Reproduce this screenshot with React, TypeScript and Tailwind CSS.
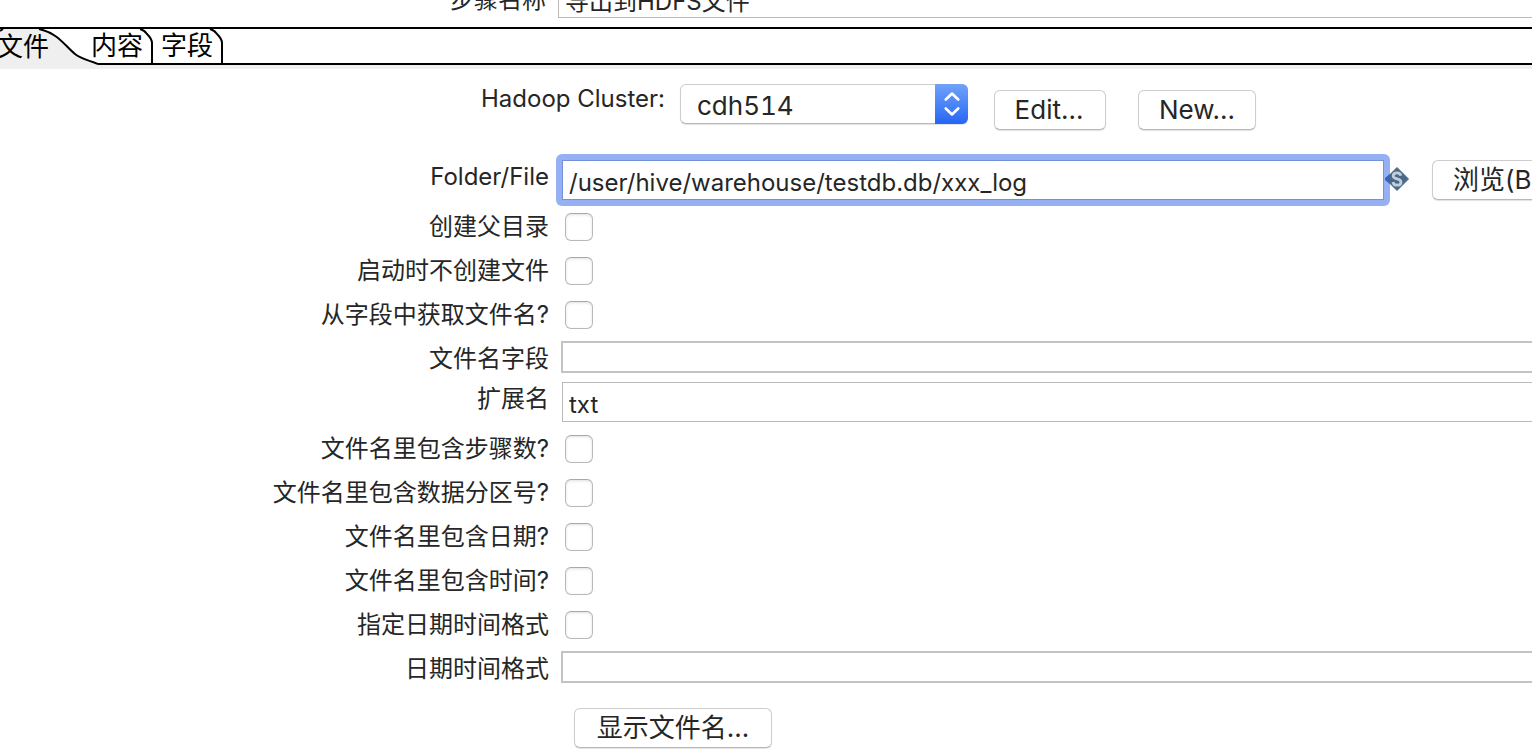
import { useState, type ReactNode } from "react";

const TEXT_FONT = "font-['Inter','Noto_Sans_CJK_SC',sans-serif]";

function Row({ label, htmlFor, className, children }: { label: string; htmlFor: string; className: string; children: ReactNode }) {
  return (
    <div className={`flex items-start ${className}`}>
      <label htmlFor={htmlFor} className="w-[549px] shrink-0 text-right whitespace-nowrap">
        {label}
      </label>
      {children}
    </div>
  );
}

function CheckRow({ id, label }: { id: string; label: string }) {
  return (
    <Row label={label} htmlFor={id} className="h-11 pt-[7px]">
      <input
        id={id}
        type="checkbox"
        className="mt-px ml-4 size-7 appearance-none rounded-[6px] border border-[#b9b9b9] border-t-[#a8a8a8] bg-white shadow-[inset_0_1px_3px_rgba(0,0,0,0.12)] checked:bg-[#3b7cf6]"
      />
    </Row>
  );
}

function EmptyField({ id, label }: { id: string; label: string }) {
  return (
    <Row label={label} htmlFor={id} className="h-11 pt-[7px]">
      <input
        id={id}
        type="text"
        className="-mt-[3px] ml-3 h-8 min-w-0 flex-1 border-2 border-r-0 border-[#c3c3c3] bg-white px-1.5 outline-none"
      />
    </Row>
  );
}

const BUTTON =
  "h-10 shrink-0 whitespace-nowrap border border-[#cdcdcd] border-b-[#b8b8b8] bg-white text-[26px] leading-9 shadow-[0_1px_1px_rgba(0,0,0,0.12)]";

function TabEdge() {
  return (
    <svg aria-hidden="true" className="absolute top-0 right-0 h-[34px] w-4" viewBox="0 0 16 34" fill="none" stroke="#000" strokeWidth="2">
      <path d="M3 0 C7 1 8 2 10 5 C13 8 15 10 15 14 V34" />
    </svg>
  );
}

export default function App() {
  const [path, setPath] = useState("/user/hive/warehouse/testdb.db/xxx_log");
  const [ext, setExt] = useState("txt");
  const [step, setStep] = useState("导出到HDFS文件");

  return (
    <main className={`overflow-hidden bg-white text-[24px] leading-[30px] text-[#262626] ${TEXT_FONT}`}>
      <header className="flex h-[27px] items-end overflow-hidden pb-[9px]">
        <label htmlFor="step" className="w-[546px] shrink-0 pb-[3px] text-right">
          步骤名称
        </label>
        <input
          id="step"
          type="text"
          value={step}
          onChange={(e) => setStep(e.target.value)}
          className="ml-3 h-10 min-w-0 flex-1 border border-r-0 border-[#b9b9b9] px-1.5 pt-0.5 outline-none"
        />
      </header>

      <nav role="tablist" className="flex h-[38px] border-t-2 border-black text-[26px] leading-[34px] text-black">
        <button role="tab" aria-selected="true" type="button" className="relative w-[98px] shrink-0 text-left">
          <svg aria-hidden="true" className="absolute inset-0 h-9 w-full" viewBox="0 0 98 36" fill="none">
            <path d="M0 0 H40 C60 4 68 21 80 28 C86 32 92 32 98 36 H0 Z" fill="#efefef" />
            <path d="M0 2 L3 0 M39 0 C58 4 65 17 75 25 C81 30 88 31 98 35" stroke="#000" strokeWidth="2" />
          </svg>
          <span className="relative -ml-[3px]">文件</span>
        </button>
        <button role="tab" aria-selected="false" type="button" className="relative flex w-[55px] shrink-0 justify-end border-b-2 border-black pr-2.5 whitespace-nowrap">
          <TabEdge />
          内容
        </button>
        <button role="tab" aria-selected="false" type="button" className="relative flex w-[70px] shrink-0 justify-end border-b-2 border-black pr-2.5 whitespace-nowrap">
          <TabEdge />
          字段
        </button>
        <div className="flex-1 border-b-2 border-black" />
      </nav>
      <div className="h-1 bg-[#efefef]" />

      <form onSubmit={(e) => e.preventDefault()} className="pt-[15px]">
        <div className="flex h-[70px] items-start">
          <label htmlFor="cluster" className="w-[665px] shrink-0 text-right">
            Hadoop Cluster:
          </label>
          <div className="relative ml-[15px] shrink-0">
            <select
              id="cluster"
              className="block h-10 w-72 appearance-none rounded-md border border-[#cdcdcd] border-b-[#b8b8b8] bg-white pt-1 pl-4 text-[26px] leading-8 tabular-nums shadow-[0_1px_1px_rgba(0,0,0,0.12)] outline-none"
            >
              <option>cdh514</option>
            </select>
            <span className="pointer-events-none absolute top-0 right-0 flex h-10 w-[33px] items-center justify-center rounded-r-md bg-gradient-to-b from-[#71a2f7] to-[#2465f5]">
              <svg aria-hidden="true" className="h-6 w-4" viewBox="0 0 16 24" fill="none" stroke="#fff" strokeWidth="2.6" strokeLinecap="round" strokeLinejoin="round">
                <path d="M1.8 7.5 L8 1.5 L14.2 7.5 M1.8 16.5 L8 22.5 L14.2 16.5" />
              </svg>
            </span>
          </div>
          <div className="ml-[26px] flex gap-8 pt-1.5">
            <button type="button" className={`w-28 rounded-md pr-0.5 ${BUTTON}`}>Edit...</button>
            <button type="button" className={`w-[118px] rounded-md ${BUTTON}`}>New...</button>
          </div>
        </div>

        <Row label="Folder/File" htmlFor="path" className="h-[51px] pt-2">
          <div className="-mt-2 ml-[7px] min-w-0 flex-1 rounded-md bg-[#95b1f4] p-1.5">
            <input
              id="path"
              type="text"
              value={path}
              onChange={(e) => setPath(e.target.value)}
              className="block h-10 w-full border border-[#7392da] bg-white px-1.5 pt-1 outline-none"
            />
          </div>
          <div className="-mt-0.5 -ml-[5px] flex w-[147px] shrink-0">
            <svg aria-hidden="true" className="mt-[7px] size-6 shrink-0" viewBox="0 0 24 24">
              <path d="M12 0.5 L23.5 12 L12 23.5 L0.5 12 Z" fill="#49688a" stroke="#49688a" strokeLinejoin="round" />
              <path d="M0 11 L5 7 V17 L0 13 Z" fill="#3c61b5" />
              <path d="M15.8 8.8 C15.4 6.6 13.8 5.8 12 5.8 C9.8 5.8 8.2 6.9 8.2 8.9 C8.2 12.8 16 10.8 16 14.9 C16 17 14.2 18.2 12 18.2 C9.8 18.2 8.3 17.2 8 15" fill="none" stroke="#c3ced8" strokeWidth="2.8" />
            </svg>
            <button type="button" className={`ml-[23px] flex-1 rounded-l-md border-r-0 pl-5 text-left ${BUTTON}`}>浏览(B</button>
          </div>
        </Row>

        <CheckRow id="parent" label="创建父目录" />
        <CheckRow id="nostart" label="启动时不创建文件" />
        <CheckRow id="fromfield" label="从字段中获取文件名?" />
        <EmptyField id="namefield" label="文件名字段" />
        <Row label="扩展名" htmlFor="ext" className="h-[46px] pt-[3px]">
          <input
            id="ext"
            type="text"
            value={ext}
            onChange={(e) => setExt(e.target.value)}
            className="-mt-0.5 ml-[13px] h-10 min-w-0 flex-1 border border-r-0 border-[#b9b9b9] bg-white px-1.5 pt-1 outline-none"
          />
        </Row>
        <CheckRow id="stepnr" label="文件名里包含步骤数?" />
        <CheckRow id="partnr" label="文件名里包含数据分区号?" />
        <CheckRow id="date" label="文件名里包含日期?" />
        <CheckRow id="time" label="文件名里包含时间?" />
        <CheckRow id="usefmt" label="指定日期时间格式" />
        <EmptyField id="fmt" label="日期时间格式" />
        <div className="flex pt-[17px] pb-px pl-[574px]">
          <button type="button" className={`w-[198px] rounded-md ${BUTTON}`}>显示文件名...</button>
        </div>
      </form>
    </main>
  );
}
